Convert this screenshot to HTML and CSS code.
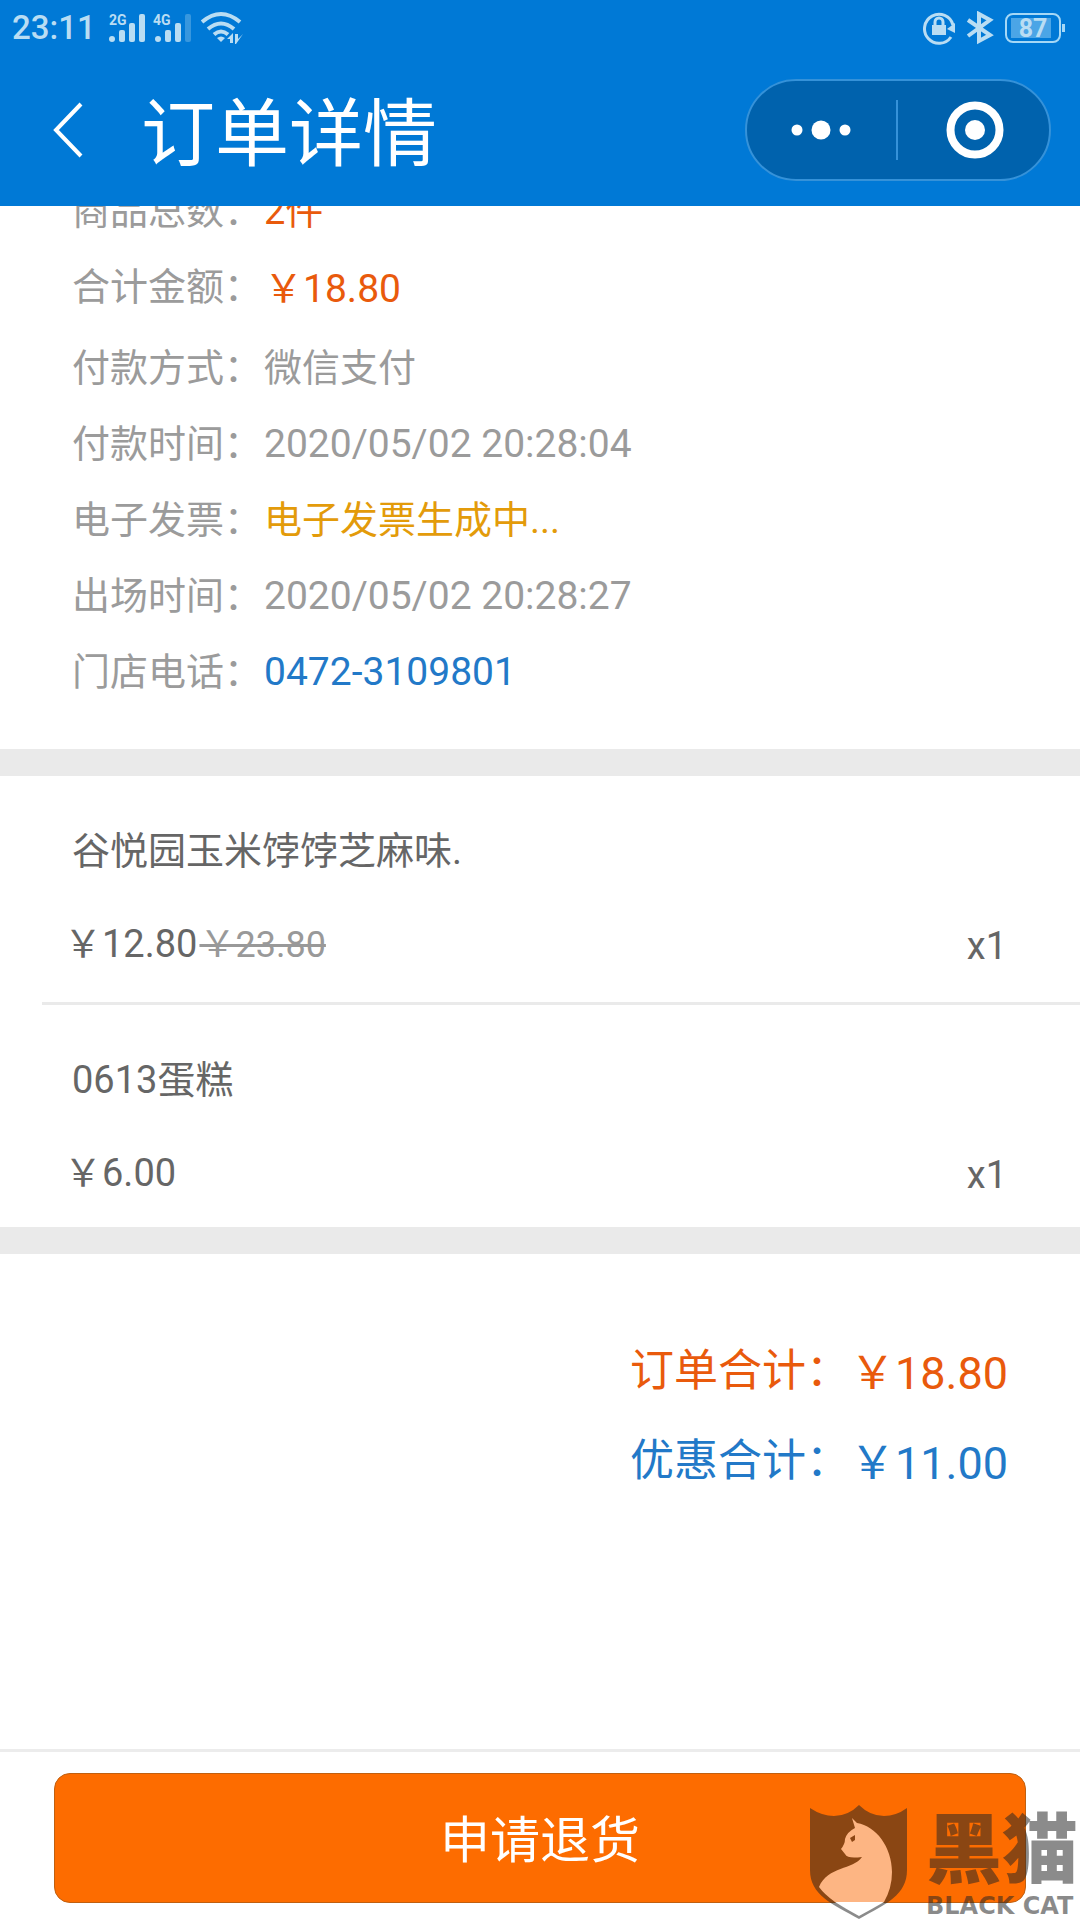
FILE: index.html
```html
<!DOCTYPE html>
<html lang="zh-CN">
<head>
<meta charset="utf-8">
<meta name="viewport" content="width=device-width, initial-scale=1">
<title>订单详情</title>
<link rel="stylesheet" href="styles.css">
</head>
<body>
<header class="top">
  <div class="status">
    <div class="status-group">
      <span class="clock">23:11</span>
      <svg class="signals" width="84" height="30" viewBox="0 0 84 30" aria-hidden="true">
        <g fill="#b9ddf3">
          <text x="0" y="12" class="net">2G</text>
          <circle cx="3" cy="26" r="3"/><rect x="10" y="17" width="6" height="12" rx="2"/><rect x="20" y="10" width="6" height="19" rx="2"/><rect x="30" y="1" width="6" height="28" rx="2"/>
          <text x="44" y="12" class="net">4G</text>
          <circle cx="49" cy="26" r="3"/><rect x="56" y="17" width="6" height="12" rx="2"/><rect x="66" y="10" width="6" height="19" rx="2"/><rect x="76" y="1" width="6" height="28" rx="2" opacity=".3"/>
        </g>
      </svg>
      <svg class="wifi" width="44" height="34" viewBox="0 0 44 34" aria-hidden="true">
        <g fill="none" stroke="#b9ddf3" stroke-width="4">
          <path d="M1 11Q20 -5 39 11"/><path d="M7 18Q20 7 33 18"/><path d="M13 23.500Q20 17.500 27 23.500"/>
        </g>
        <path d="M16 27Q20 24 24 27L20 31Z" fill="#b9ddf3"/>
        <path d="M26 28 32 22V32H29V28ZM34 23H37V28L42 23 35 33H34Z" fill="#b9ddf3"/>
      </svg>
    </div>
    <div class="status-group status-right">
      <svg width="34" height="34" viewBox="0 0 34 34" aria-hidden="true">
        <path d="M30 14A14.500 14.500 0 1 0 28 26" fill="none" stroke="#b9ddf3" stroke-width="3"/>
        <path d="M24 18 32 12V22Z" fill="#b9ddf3"/>
        <rect x="9" y="14" width="14" height="10" fill="#b9ddf3"/>
        <path d="M12 15V11a4 4 0 0 1 8 0V15" fill="none" stroke="#b9ddf3" stroke-width="3"/>
      </svg>
      <svg width="28" height="34" viewBox="0 0 28 34" aria-hidden="true">
        <path d="M2 9 24 24 13 30V3L24 9 2 25" fill="none" stroke="#b9ddf3" stroke-width="4"/>
      </svg>
      <div class="battery">87</div>
    </div>
  </div>
  <div class="nav">
    <button class="back" type="button" aria-label="返回">
      <svg width="32" height="56" viewBox="0 0 32 56"><path d="M29 2 4 28 29 54" fill="none" stroke="#fff" stroke-width="4"/></svg>
    </button>
    <h1 class="title">订单详情</h1>
    <div class="capsule">
      <button class="cap-btn" type="button" aria-label="更多">
        <svg width="60" height="20" viewBox="0 0 60 20" fill="#fff"><circle cx="6" cy="10" r="5.500"/><circle cx="30" cy="10" r="9.500"/><circle cx="54" cy="10" r="5.500"/></svg>
      </button>
      <button class="cap-btn" type="button" aria-label="关闭">
        <svg width="58" height="58" viewBox="0 0 58 58"><circle cx="29" cy="29" r="24.500" fill="none" stroke="#fff" stroke-width="8"/><circle cx="29" cy="29" r="10" fill="#fff"/></svg>
      </button>
    </div>
  </div>
</header>

<main class="main">
  <section class="details">
    <dl class="info">
      <div class="row"><dt>商品总数：</dt><dd class="orange">2件</dd></div>
      <div class="row row-price"><dt>合计金额：</dt><dd class="orange">￥18.80</dd></div>
      <div class="row"><dt>付款方式：</dt><dd>微信支付</dd></div>
      <div class="row"><dt>付款时间：</dt><dd class="num">2020/05/02 20:28:04</dd></div>
      <div class="row"><dt>电子发票：</dt><dd class="amber">电子发票生成中...</dd></div>
      <div class="row"><dt>出场时间：</dt><dd class="num">2020/05/02 20:28:27</dd></div>
      <div class="row"><dt>门店电话：</dt><dd class="num"><a class="blue" href="tel:0472-3109801">0472-3109801</a></dd></div>
    </dl>
  </section>

  <section class="items">
    <article class="item">
      <h2 class="name">谷悦园玉米饽饽芝麻味.</h2>
      <div class="line"><p class="price">￥12.80<s class="old">￥23.80</s></p><span class="qty">x1</span></div>
    </article>
    <article class="item">
      <h2 class="name">0613蛋糕</h2>
      <div class="line"><p class="price">￥6.00</p><span class="qty">x1</span></div>
    </article>
  </section>

  <dl class="totals">
    <div class="total orange"><dt>订单合计：</dt><dd>￥18.80</dd></div>
    <div class="total blue"><dt>优惠合计：</dt><dd>￥11.00</dd></div>
  </dl>
</main>

<footer class="footer">
  <button class="refund" type="button">申请退货</button>
  <div class="mark">
    <svg width="98" height="116" viewBox="0 0 98 116" aria-hidden="true">
      <path d="M0 4Q12 12 24 12Q38 12 49 1Q60 12 74 12Q86 12 97 4V66C97 91 76 100 49 115C22 100 0 91 0 66Z" fill="#242424" fill-opacity=".53"/>
      <path d="M42 14 47 19C66 22 82 43 82 68Q82 84 74 98H25Q14 90 9 83C18 62 43 66 52 53C43 54 37 54 35 50L31 45Q35 40 35 35Q37 28 45 24Z" fill="#fdb583"/>
      <path d="M25 98H74Q62 105 49 112Q36 105 25 98Z" fill="#fff"/>
      <path d="M40 34 45 31 45 36 42 38Z" fill="#8b4513"/>
    </svg>
    <div class="mark-text"><span class="mark-cn">黑猫</span><span class="mark-en">BLACK CAT</span></div>
  </div>
</footer>
</body>
</html>
```
FILE: styles.css
```css
* { box-sizing: border-box; }
body {
  margin: 0;
  min-height: 100vh;
  display: flex;
  flex-direction: column;
  background: #fff;
  color: #9b9b9b;
  font-family: Roboto, "Noto Sans CJK SC", sans-serif;
  font-size: 38px;
  line-height: 76px;
}
h1, h2, p, dl, dd { margin: 0; font-weight: 400; }
button { border: 0; padding: 0; background: none; font-family: inherit; }
svg { display: block; }
a { text-decoration: none; }
.orange { color: #e95a0c; }
.amber { color: #e39b0a; }
.blue { color: #2279c8; }

.top { position: relative; z-index: 1; background: #0079d6; padding-bottom: 25px; }
.status {
  display: flex;
  justify-content: space-between;
  height: 56px;
  padding: 0 13px 0 12px;
  color: #b9ddf3;
}
.status-group { display: flex; align-items: center; }
.clock { font-size: 33px; font-weight: 500; }
.signals { margin-left: 13px; }
.net { font-size: 14px; font-weight: 700; }
.wifi { margin-left: 8px; }
.status-right { gap: 9px; }
.battery {
  position: relative;
  width: 56px;
  height: 30px;
  margin-left: 2px;
  margin-right: 6px;
  border: 2px solid #a5d8f6;
  border-radius: 8px;
  background: linear-gradient(#4ba5e6, #4ba5e6) 4px center / 40px 20px no-repeat;
  font-size: 25px;
  font-weight: 700;
  line-height: 28px;
  text-align: center;
}
.battery::after {
  content: "";
  position: absolute;
  right: -6px;
  top: 9px;
  width: 3px;
  height: 8px;
  background: #a5d8f6;
}
.nav { display: flex; align-items: center; height: 125px; padding: 23px 29px 0 52px; }
.title { flex: 1; margin-left: 57px; padding-top: 10px; color: #fff; font-size: 74px; line-height: 92px; }
.capsule {
  display: flex;
  width: 306px;
  height: 102px;
  border: 2px solid #3592d9;
  border-radius: 51px;
  background: #0062ad;
}
.cap-btn { flex: 1; display: flex; align-items: center; justify-content: center; position: relative; }
.cap-btn + .cap-btn { padding-left: 5px; }
.cap-btn + .cap-btn::before {
  content: "";
  position: absolute;
  left: 0;
  top: 19px;
  width: 2px;
  height: 60px;
  background: #3592d9;
}

.details { padding-bottom: 39px; border-bottom: 27px solid #eaeaea; }
/* the list is scrolled: its first row sits partly under the header */
.info { margin-top: -33px; padding: 0 72px; }
.row { display: flex; }
.row dd { margin-left: 2px; }
.num, .row-price dd { font-size: 39px; }
.row-price { padding-bottom: 1px; }
.row-price dd { line-height: 80px; }

.items { color: #666; border-bottom: 27px solid #eaeaea; }
.item { margin-left: 42px; padding: 37px 73px 16px 30px; }
.item + .item { border-top: 3px solid #eaeaea; padding-bottom: 12px; }
.name { font-size: 38px; }
.line { display: flex; justify-content: space-between; margin: 17px 0 0 -8px; }
.qty { line-height: 80px; }
.old { margin-left: 2px; color: #999; font-size: 36px; }

.totals { padding: 72px; font-size: 44px; line-height: 90px; }
.total { display: flex; justify-content: flex-end; }
.total dd { padding-top: 6px; font-size: 45px; line-height: 84px; }

.footer { position: relative; margin-top: auto; border-top: 3px solid #ececec; padding: 21px 54px 17px; }
.refund {
  display: block;
  width: 100%;
  height: 130px;
  padding-bottom: 4px;
  border: 1px solid #c06010;
  border-radius: 16px;
  background: #fd6c00;
  color: #fff;
  font-size: 50px;
}
.mark {
  position: absolute;
  right: 2px;
  bottom: 0;
  display: flex;
  gap: 18px;
  color: rgba(36, 36, 36, .53);
  pointer-events: none;
}
.mark-text { display: flex; flex-direction: column; }
.mark-cn { font-family: "Noto Sans CJK SC", sans-serif; font-size: 76px; font-weight: 900; line-height: 80px; }
.mark-en { padding-top: 8px; font-family: "DejaVu Sans", sans-serif; font-size: 24px; font-weight: 700; line-height: 28px; white-space: nowrap; }
```
